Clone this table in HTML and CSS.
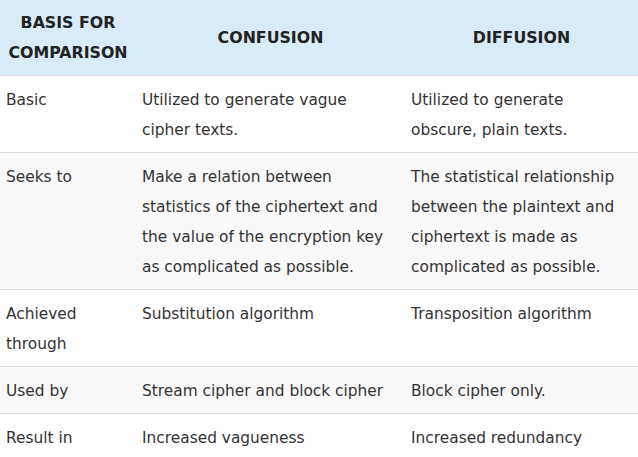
FILE: index.html
```html
<!DOCTYPE html>
<html>
<head>
<meta charset="utf-8">
<link rel="stylesheet" href="styles.css">
</head>
<body>
<table class="cmp">
  <colgroup>
    <col class="c1">
    <col class="c2">
    <col class="c3">
  </colgroup>
  <thead>
    <tr>
      <th>BASIS FOR<br>COMPARISON</th>
      <th>CONFUSION</th>
      <th>DIFFUSION</th>
    </tr>
  </thead>
  <tbody>
    <tr>
      <td>Basic</td>
      <td>Utilized to generate vague<br>cipher texts.</td>
      <td>Utilized to generate<br>obscure, plain texts.</td>
    </tr>
    <tr class="alt">
      <td>Seeks to</td>
      <td>Make a relation between<br>statistics of the ciphertext and<br>the value of the encryption key<br>as complicated as possible.</td>
      <td>The statistical relationship<br>between the plaintext and<br>ciphertext is made as<br>complicated as possible.</td>
    </tr>
    <tr>
      <td>Achieved<br>through</td>
      <td>Substitution algorithm</td>
      <td>Transposition algorithm</td>
    </tr>
    <tr class="alt">
      <td>Used by</td>
      <td>Stream cipher and block cipher</td>
      <td>Block cipher only.</td>
    </tr>
    <tr>
      <td>Result in</td>
      <td>Increased vagueness</td>
      <td>Increased redundancy</td>
    </tr>
  </tbody>
</table>
</body>
</html>
```
FILE: styles.css
```css
html, body {
  margin: 0;
  padding: 0;
  background: #ffffff;
}
.cmp {
  border-collapse: collapse;
  width: 638px;
  table-layout: fixed;
  font-family: "DejaVu Sans", Verdana, sans-serif;
  font-size: 15.4px;
  line-height: 30px;
  color: #333333;
}
.c1 { width: 136px; }
.c2 { width: 269px; }
.c3 { width: 233px; }
.cmp th {
  background: #d8ebf7;
  color: #222222;
  font-weight: bold;
  font-size: 15.8px;
  text-align: center;
  padding: 8px 6px 7px;
  border-bottom: 1px solid #dddddd;
  vertical-align: middle;
}
.cmp td {
  padding: 9px 6px 7px;
  vertical-align: top;
  text-align: left;
  border-bottom: 1px solid #dddddd;
  white-space: nowrap;
}
.cmp tr.alt td {
  background: #f9f9f9;
}
```
